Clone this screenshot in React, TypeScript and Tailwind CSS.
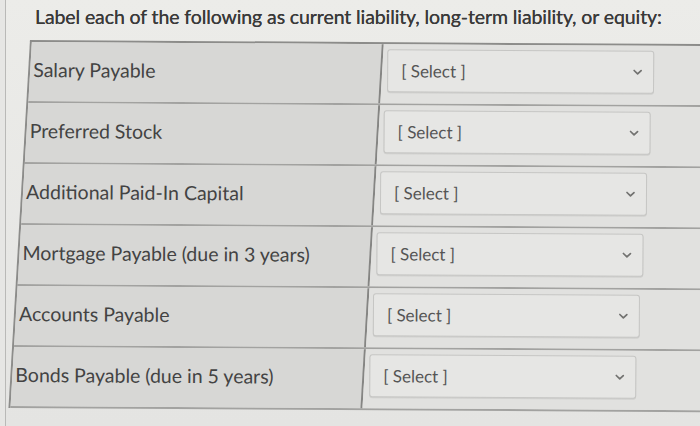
import React from 'react';

const items = [
  'Salary Payable',
  'Preferred Stock',
  'Additional Paid-In Capital',
  'Mortgage Payable (due in 3 years)',
  'Accounts Payable',
  'Bonds Payable (due in 5 years)',
];

function Chevron() {
  return (
    <svg width="11" height="7" viewBox="0 0 11 7" fill="none" className="text-[#727270]">
      <path d="M2 1.8 L5.5 5.2 L9 1.8" stroke="currentColor" strokeWidth="1.7" strokeLinecap="round" strokeLinejoin="round" />
    </svg>
  );
}

export default function App() {
  return (
    <div className="w-[700px] h-[426px] overflow-hidden bg-[#e6e6e4] font-['Lato','Liberation_Sans',sans-serif]">
      <div className="h-full border-l border-[#b9b9b7] ml-[5px] bg-gradient-to-b from-[#ecece9] to-[#e4e4e2]">
        <h1 className="pl-[29px] pt-[3px] text-[19.5px] leading-[28px] text-[#3a3a3a] tracking-[-0.1px] [text-shadow:0_0_0.3px_#3a3a3a]">
          Label each of the following as current liability, long-term liability, or equity:
        </h1>
        <div className="mt-[9px] ml-[24px] w-[760px] origin-top-left [transform:skewX(-3deg)_rotate(0.35deg)]">
          <div className="border-t-2 border-l-2 border-[#8c8c8a]">
            {items.map((label) => (
              <div key={label} className="flex h-[61px] border-b-2 border-[#a2a2a0]">
                <div className="w-[352px] shrink-0 flex items-center pl-[3px] pb-[3px] bg-[#d7d7d5] border-r-2 border-[#858583]">
                  <span className="inline-block text-[19.5px] text-[#434343] [transform:skewX(3deg)]">{label}</span>
                </div>
                <div className="flex-1 flex items-start pt-[5px] pl-[5px] bg-[#e1e1df]">
                  <div className="w-[267px] h-[43px] flex items-center justify-between pl-[13px] pr-[10px] bg-[#e6e6e4] border border-[#c6c6c4] rounded-[3px] shadow-[0_1px_0_#d0d0ce] [transform:skewX(3deg)]">
                    <span className="text-[17px] text-[#555555]">[ Select ]</span>
                    <Chevron />
                  </div>
                </div>
              </div>
            ))}
          </div>
        </div>
      </div>
    </div>
  );
}
